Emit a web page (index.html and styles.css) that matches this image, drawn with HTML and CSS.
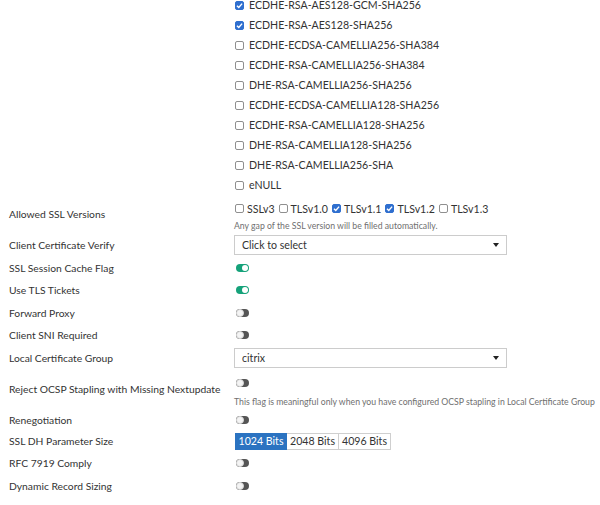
FILE: index.html
```html
<!DOCTYPE html>
<html>
<head>
<meta charset="utf-8">
<link rel="stylesheet" href="styles.css">
</head>
<body>
<div class="form">
  <div class="row ciphers">
    <div class="label"></div>
    <div class="value">
      <div class="cipher"><span class="cb on"><svg viewBox="0 0 10 10"><path d="M2.2 5.2 L4.2 7.2 L7.9 2.9" /></svg></span>ECDHE-RSA-AES128-GCM-SHA256</div>
      <div class="cipher"><span class="cb on"><svg viewBox="0 0 10 10"><path d="M2.2 5.2 L4.2 7.2 L7.9 2.9" /></svg></span>ECDHE-RSA-AES128-SHA256</div>
      <div class="cipher"><span class="cb"></span>ECDHE-ECDSA-CAMELLIA256-SHA384</div>
      <div class="cipher"><span class="cb"></span>ECDHE-RSA-CAMELLIA256-SHA384</div>
      <div class="cipher"><span class="cb"></span>DHE-RSA-CAMELLIA256-SHA256</div>
      <div class="cipher"><span class="cb"></span>ECDHE-ECDSA-CAMELLIA128-SHA256</div>
      <div class="cipher"><span class="cb"></span>ECDHE-RSA-CAMELLIA128-SHA256</div>
      <div class="cipher"><span class="cb"></span>DHE-RSA-CAMELLIA128-SHA256</div>
      <div class="cipher"><span class="cb"></span>DHE-RSA-CAMELLIA256-SHA</div>
      <div class="cipher"><span class="cb"></span>eNULL</div>
    </div>
  </div>

  <div class="row versions">
    <div class="label">Allowed SSL Versions</div>
    <div class="value">
      <div class="vlist">
        <span class="ver"><span class="cb"></span>SSLv3</span>
        <span class="ver"><span class="cb"></span>TLSv1.0</span>
        <span class="ver"><span class="cb on"><svg viewBox="0 0 10 10"><path d="M2.2 5.2 L4.2 7.2 L7.9 2.9" /></svg></span>TLSv1.1</span>
        <span class="ver"><span class="cb on"><svg viewBox="0 0 10 10"><path d="M2.2 5.2 L4.2 7.2 L7.9 2.9" /></svg></span>TLSv1.2</span>
        <span class="ver"><span class="cb"></span>TLSv1.3</span>
      </div>
      <div class="hint">Any gap of the SSL version will be filled automatically.</div>
    </div>
  </div>

  <div class="row h24">
    <div class="label">Client Certificate Verify</div>
    <div class="value"><div class="select">Click to select<span class="caret"></span></div></div>
  </div>

  <div class="row h22">
    <div class="label">SSL Session Cache Flag</div>
    <div class="value"><span class="toggle on"></span></div>
  </div>
  <div class="row h22">
    <div class="label">Use TLS Tickets</div>
    <div class="value"><span class="toggle on"></span></div>
  </div>
  <div class="row h23">
    <div class="label">Forward Proxy</div>
    <div class="value"><span class="toggle"></span></div>
  </div>
  <div class="row h22">
    <div class="label">Client SNI Required</div>
    <div class="value"><span class="toggle"></span></div>
  </div>
  <div class="row h23">
    <div class="label">Local Certificate Group</div>
    <div class="value"><div class="select">citrix<span class="caret"></span></div></div>
  </div>

  <div class="row ocsp">
    <div class="label">Reject OCSP Stapling with Missing Nextupdate</div>
    <div class="value">
      <div class="tline"><span class="toggle"></span></div>
      <div class="hint">This flag is meaningful only when you have configured OCSP stapling in Local Certificate Group</div>
    </div>
  </div>

  <div class="row h21">
    <div class="label">Renegotiation</div>
    <div class="value"><span class="toggle"></span></div>
  </div>
  <div class="row h22">
    <div class="label">SSL DH Parameter Size</div>
    <div class="value">
      <div class="btngroup">
        <span class="btn active">1024 Bits</span><span class="btn">2048 Bits</span><span class="btn">4096 Bits</span>
      </div>
    </div>
  </div>
  <div class="row h22">
    <div class="label">RFC 7919 Comply</div>
    <div class="value"><span class="toggle"></span></div>
  </div>
  <div class="row h23">
    <div class="label">Dynamic Record Sizing</div>
    <div class="value"><span class="toggle"></span></div>
  </div>
</div>
</body>
</html>
```

FILE: styles.css
```css
html, body {
  margin: 0;
  padding: 0;
  background: #ffffff;
}
body {
  font-family: Lato, "Open Sans", "Liberation Sans", sans-serif;
  font-size: 10.6px;
  color: #333333;
  overflow: hidden;
}
.form {
  margin-top: -5px;
  padding-left: 9px;
}
.row {
  display: flex;
  align-items: center;
}
.label {
  width: 225px;
  flex: none;
  line-height: 14px;
  font-size: 10.3px;
  white-space: nowrap;
}
.value {
  flex: 1;
  display: flex;
  flex-direction: column;
  align-items: flex-start;
}
.h21 { height: 21px; }
.h22 { height: 22px; }
.h23 { height: 23px; }
.h24 { height: 24px; }

.cipher {
  height: 20px;
  display: flex;
  align-items: center;
  padding-left: 1px;
  white-space: nowrap;
}
.cb {
  display: inline-block;
  box-sizing: border-box;
  width: 9px;
  height: 9px;
  border: 1px solid #8f8f8f;
  border-radius: 2px;
  background: #fff;
  margin-right: 5px;
  flex: none;
}
.cb.on {
  border-color: #2f6fcf;
  background: #2f6fcf;
}
.cb svg {
  display: block;
  width: 9px;
  height: 9px;
  margin: -1px;
}
.cb svg path {
  fill: none;
  stroke: #fff;
  stroke-width: 1.6;
}

.versions {
  height: 38px;
}
.versions .value {
  padding-top: 2px;
}
.vlist {
  height: 20px;
  display: flex;
  align-items: center;
  padding-left: 1px;
  white-space: nowrap;
}
.ver {
  display: inline-flex;
  align-items: center;
  margin-right: 4px;
}
.ver .cb {
  margin-right: 3px;
}
.hint {
  font-size: 8.7px;
  line-height: 12px;
  color: #6f6f6f;
  margin-top: 1px;
  white-space: nowrap;
}

.select {
  box-sizing: border-box;
  width: 273px;
  height: 20px;
  border: 1px solid #cccccc;
  display: flex;
  align-items: center;
  padding-left: 7px;
  position: relative;
  color: #333;
}
.caret {
  position: absolute;
  right: 7px;
  top: 7px;
  width: 0;
  height: 0;
  border-left: 3.5px solid transparent;
  border-right: 3.5px solid transparent;
  border-top: 4px solid #222;
}

.toggle {
  display: inline-block;
  width: 13px;
  height: 8px;
  border-radius: 4px;
  background: #555555;
  position: relative;
  margin-left: 2px;
}
.toggle::after {
  content: "";
  position: absolute;
  left: 0;
  top: 0;
  width: 8px;
  height: 8px;
  box-sizing: border-box;
  border-radius: 50%;
  background: #f4f4f4;
  border: 1px solid #d6d6d6;
}
.toggle.on {
  background: #15a27a;
}
.toggle.on::after {
  left: 6px;
  top: 1px;
  width: 6px;
  height: 6px;
  border: none;
  background: #ffffff;
}

.ocsp {
  height: 40px;
}
.ocsp .value {
  padding-top: 4px;
}
.tline {
  height: 16px;
  display: flex;
  align-items: center;
}
.ocsp .hint {
  margin-top: 5px;
}

.btngroup {
  display: flex;
  margin-left: 1px;
}
.btn {
  box-sizing: border-box;
  height: 17px;
  line-height: 15px;
  padding: 0;
  border: 1px solid #cfcfcf;
  border-left: none;
  color: #333;
  width: 52px;
  text-align: center;
  white-space: nowrap;
}
.btn:first-child {
  border-left: 1px solid #cfcfcf;
}
.btn.active {
  background: #2b73c1;
  border-color: #2b73c1;
  color: #ffffff;
}
```
